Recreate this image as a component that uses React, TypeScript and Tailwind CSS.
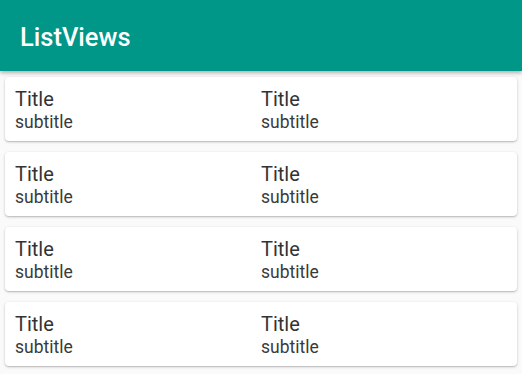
const rows = [0, 1, 2, 3];

function Cell() {
  return (
    <div className="flex flex-col">
      <span className="text-[20px] leading-[24px] text-[#333]">Title</span>
      <span className="text-[17.5px] leading-[23px] text-[#3a3a3a]">subtitle</span>
    </div>
  );
}

export default function App() {
  return (
    <div className="w-[522px] h-[374px] overflow-hidden bg-[#fafafa] font-['Roboto',sans-serif]">
      <header className="h-[71px] bg-[#009688] flex items-center px-5 pt-[3px] shadow-[0_2px_4px_rgba(0,0,0,0.3)] relative z-10">
        <h1 className="text-[25.5px] font-medium text-white">ListViews</h1>
      </header>

      <div className="flex flex-col gap-[11px] pt-[6px] px-[5px]">
        {rows.map((r) => (
          <div
            key={r}
            className="h-16 bg-white rounded-[4px] shadow-[0_1px_3px_rgba(0,0,0,0.2),0_1px_1px_rgba(0,0,0,0.1)] grid grid-cols-2 px-[10px] pt-[10px]"
          >
            <Cell />
            <Cell />
          </div>
        ))}
      </div>
    </div>
  );
}
